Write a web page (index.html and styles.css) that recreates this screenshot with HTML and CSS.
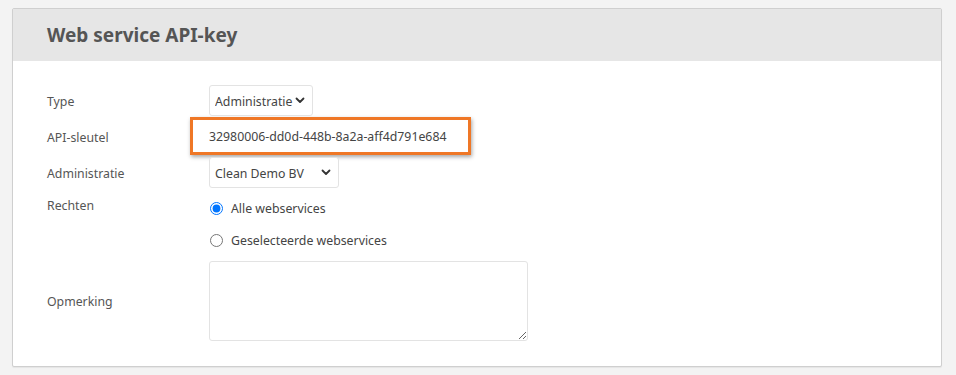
FILE: index.html
```html
<!DOCTYPE html>
<html lang="nl">

<head>
    <meta charset="UTF-8">
    <meta name="viewport" content="width=device-width, initial-scale=1.0">
    <title>Web service API-key</title>
    <link rel="stylesheet" href="styles.css">
</head>

<body>
    <div class="panel">
        <div class="panel-head">
            <h2>Web service API-key</h2>
        </div>
        <div class="panel-body">
            <div class="form-row">
                <label>Type</label>
                <div class="select-wrap type-select">
                    <select>
                        <option>Administratie</option>
                    </select>
                    <svg class="chevron" width="10" height="7" viewBox="0 0 10 7"><path d="M1.5 1.5 5 5l3.5-3.5" fill="none" stroke="#333" stroke-width="1.8" stroke-linecap="round" stroke-linejoin="round"/></svg>
                </div>
            </div>
            <div class="form-row">
                <label>API-sleutel</label>
                <div class="key-box">32980006-dd0d-448b-8a2a-aff4d791e684</div>
            </div>
            <div class="form-row">
                <label>Administratie</label>
                <div class="select-wrap admin-select">
                    <select>
                        <option>Clean Demo BV</option>
                    </select>
                    <svg class="chevron" width="10" height="7" viewBox="0 0 10 7"><path d="M1.5 1.5 5 5l3.5-3.5" fill="none" stroke="#333" stroke-width="1.8" stroke-linecap="round" stroke-linejoin="round"/></svg>
                </div>
            </div>
            <div class="form-row rights">
                <label>Rechten</label>
                <div class="radios">
                    <label class="radio"><input type="radio" name="rechten" checked> Alle webservices</label>
                    <label class="radio"><input type="radio" name="rechten"> Geselecteerde webservices</label>
                </div>
            </div>
            <div class="form-row">
                <label>Opmerking</label>
                <textarea></textarea>
            </div>
        </div>
    </div>
</body>

</html>
```

FILE: styles.css
```css
html,
body {
    margin: 0;
    padding: 0;
    background: #f3f3f3;
    font-family: "Noto Sans", "Open Sans", sans-serif;
    font-size: 12.3px;
    color: #555;
}

body {
    padding: 8px 14px 10px 12px;
}

.panel {
    background: #fff;
    border: 1px solid #cfcfcf;
    border-radius: 2px;
    box-shadow: 0 1px 1px rgba(0, 0, 0, 0.06);
}

.panel-head {
    background: #e6e6e6;
    height: 52px;
    padding-left: 34px;
    display: flex;
    align-items: center;
}

.panel-head h2 {
    margin: 0;
    font-size: 19px;
    font-weight: bold;
    color: #555;
}

.panel-body {
    padding: 24px 34px 25px;
    display: flex;
    flex-direction: column;
    gap: 5px;
}

.form-row {
    display: flex;
    align-items: center;
    min-height: 31px;
}

.form-row > label {
    width: 162px;
    flex-shrink: 0;
    padding-top: 1px;
}

.select-wrap {
    position: relative;
    height: 31px;
}

.select-wrap select {
    appearance: none;
    -webkit-appearance: none;
    height: 31px;
    border: 1px solid #e3e3e3;
    border-radius: 3px;
    background: #fff;
    font-family: inherit;
    font-size: 12.3px;
    color: #444;
    padding: 1px 18px 0 5px;
    outline: none;
}

.type-select select {
    width: 104px;
}

.admin-select select {
    width: 130px;
}

.chevron {
    position: absolute;
    right: 8px;
    top: 12px;
    pointer-events: none;
}

.key-box {
    margin: -4px 0 -3px -19px;
    width: 281px;
    height: 38px;
    box-sizing: border-box;
    border: 3px solid #ef7726;
    box-shadow: 1px 2px 4px rgba(0, 0, 0, 0.35);
    padding-left: 16px;
    display: flex;
    align-items: center;
    color: #444;
    background: #fff;
}

.form-row.rights {
    align-items: flex-start;
}

.form-row.rights > label {
    line-height: 24px;
}

.radios {
    display: flex;
    flex-direction: column;
}

.radio {
    display: flex;
    align-items: center;
    height: 31px;
    color: #444;
}

.radio:last-child {
    height: 32px;
}

.radio input {
    margin: 0 8px 0 1px;
    width: 13px;
    height: 13px;
}

textarea {
    width: 319px;
    height: 80px;
    box-sizing: border-box;
    border: 1px solid #e3e3e3;
    border-radius: 3px;
    margin: 0;
    font-family: inherit;
    outline: none;
}
```
